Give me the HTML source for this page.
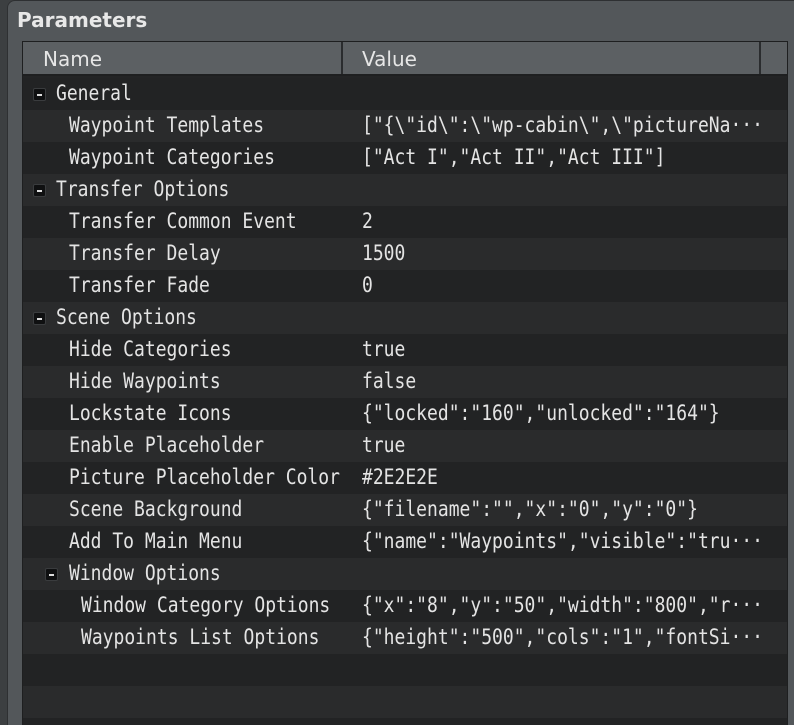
<!DOCTYPE html>
<html><head><style>
html,body{margin:0;width:794px;height:725px;overflow:hidden;}
body{background:#3c3f41;font-family:"DejaVu Sans Mono","Liberation Mono",monospace;position:relative;}
#panel{position:absolute;left:7px;top:0;width:800px;height:740px;background:#53575a;border:1px solid #2e3032;border-radius:8px;box-sizing:border-box;}
#title{position:absolute;left:17px;top:8px;font-family:"DejaVu Sans","Liberation Sans",sans-serif;font-weight:bold;font-size:20px;color:#e8e8e8;}
#tbl{position:absolute;left:22px;top:41px;width:764px;height:700px;border:1px solid #1e1f20;background:#232425;overflow:hidden;}
#hdr{position:absolute;left:0;top:0;width:764px;height:32px;background:#5c6063;border-bottom:2px solid #1e1f20;}
.h{position:absolute;top:5px;font-family:"DejaVu Sans","Liberation Sans",sans-serif;font-size:20px;color:#e6e6e6;}
.vd{position:absolute;top:0;width:2px;height:32px;background:#2a2c2e;}
.row{position:absolute;left:0;width:764px;height:32px;color:#e4e4e4;font-size:18px;line-height:32px;white-space:nowrap;}
.row span{display:inline-block;transform:scaleY(1.18);}
.a{background:#222324}.b{background:#2a2b2c}
.n{position:absolute;top:0}
.v{position:absolute;left:339px;top:0}
.ic{position:absolute;top:10px;width:11px;height:11px;background:#0f1011;border:1px solid #3a3c3e;border-radius:2px;}
.ic:after{content:"";position:absolute;left:3px;top:5px;width:5px;height:2px;background:#ddd;}
</style></head><body>
<div id="panel"></div>
<div id="title">Parameters</div>
<div id="tbl">
<div id="hdr"><span class="h" style="left:20px">Name</span><div class="vd" style="left:318px"></div><span class="h" style="left:339px">Value</span><div class="vd" style="left:736px"></div></div>
<div class="row a" style="top:36px"><div class="ic" style="left:10px"></div><span class="n" style="left:33px">General</span></div>
<div class="row b" style="top:68px"><span class="n" style="left:46px">Waypoint Templates</span><span class="v">["{\"id\":\"wp-cabin\",\"pictureNa···</span></div>
<div class="row a" style="top:100px"><span class="n" style="left:46px">Waypoint Categories</span><span class="v">["Act I","Act II","Act III"]</span></div>
<div class="row b" style="top:132px"><div class="ic" style="left:10px"></div><span class="n" style="left:33px">Transfer Options</span></div>
<div class="row a" style="top:164px"><span class="n" style="left:46px">Transfer Common Event</span><span class="v">2</span></div>
<div class="row b" style="top:196px"><span class="n" style="left:46px">Transfer Delay</span><span class="v">1500</span></div>
<div class="row a" style="top:228px"><span class="n" style="left:46px">Transfer Fade</span><span class="v">0</span></div>
<div class="row b" style="top:260px"><div class="ic" style="left:10px"></div><span class="n" style="left:33px">Scene Options</span></div>
<div class="row a" style="top:292px"><span class="n" style="left:46px">Hide Categories</span><span class="v">true</span></div>
<div class="row b" style="top:324px"><span class="n" style="left:46px">Hide Waypoints</span><span class="v">false</span></div>
<div class="row a" style="top:356px"><span class="n" style="left:46px">Lockstate Icons</span><span class="v">{"locked":"160","unlocked":"164"}</span></div>
<div class="row b" style="top:388px"><span class="n" style="left:46px">Enable Placeholder</span><span class="v">true</span></div>
<div class="row a" style="top:420px"><span class="n" style="left:46px">Picture Placeholder Color</span><span class="v">#2E2E2E</span></div>
<div class="row b" style="top:452px"><span class="n" style="left:46px">Scene Background</span><span class="v">{"filename":"","x":"0","y":"0"}</span></div>
<div class="row a" style="top:484px"><span class="n" style="left:46px">Add To Main Menu</span><span class="v">{"name":"Waypoints","visible":"tru···</span></div>
<div class="row b" style="top:516px"><div class="ic" style="left:22px"></div><span class="n" style="left:46px">Window Options</span></div>
<div class="row a" style="top:548px"><span class="n" style="left:58px">Window Category Options</span><span class="v">{"x":"8","y":"50","width":"800","r···</span></div>
<div class="row b" style="top:580px"><span class="n" style="left:58px">Waypoints List Options</span><span class="v">{"height":"500","cols":"1","fontSi···</span></div>
<div class="row a" style="top:612px"></div>
<div class="row b" style="top:644px"></div>
<div class="row a" style="top:676px"></div>
</div>
</body></html>
